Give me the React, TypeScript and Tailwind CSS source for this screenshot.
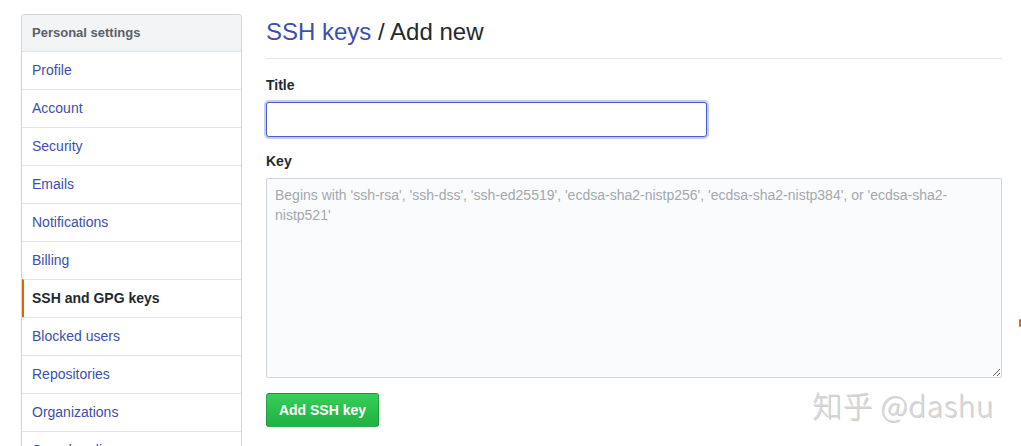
import { useState } from "react";

const menuItems = [
  "Profile",
  "Account",
  "Security",
  "Emails",
  "Notifications",
  "Billing",
  "SSH and GPG keys",
  "Blocked users",
  "Repositories",
  "Organizations",
  "Saved replies",
];

const App = () => {
  const [title, setTitle] = useState("");
  const [key, setKey] = useState("");

  return (
    <div className="relative h-[446px] w-[1021px] overflow-hidden bg-white font-['Liberation_Sans',Arial,sans-serif] text-[14px] text-[#24292e]">
      <div className="flex items-start pl-[21px] pt-[14px]">
        {/* sidebar */}
        <nav className="w-[221px] shrink-0 rounded-t-[3px] border border-[#d1d5da]">
          <div className="flex h-[36px] items-center rounded-t-[3px] bg-[#f3f4f6] pl-[10px] text-[13px] font-bold text-[#586069]">
            Personal settings
          </div>
          {menuItems.map((item) => {
            const active = item === "SSH and GPG keys";
            return (
              <a
                key={item}
                href="#"
                className={
                  active
                    ? "flex h-[38px] items-center border-t border-l-2 border-t-[#e1e4e8] border-l-[#e36209] pl-[8px] font-bold text-[#24292e]"
                    : "flex h-[38px] items-center border-t border-[#e1e4e8] pl-[10px] text-[#3c4fae]"
                }
              >
                {item}
              </a>
            );
          })}
        </nav>

        {/* main */}
        <main className="ml-[24px] w-[736px]">
          <div className="border-b border-[#e1e4e8] pb-[11px] pt-[3px]">
            <h2 className="text-[24px] leading-[30px] font-normal">
              <a href="#" className="text-[#3c4fae]">
                SSH keys
              </a>{" "}
              / Add new
            </h2>
          </div>

          <form className="pt-[16px]" onSubmit={(e) => e.preventDefault()}>
            <label className="block leading-[20px] font-bold">Title</label>
            <input
              value={title}
              onChange={(e) => setTitle(e.target.value)}
              className="mt-[7px] block h-[35px] w-[441px] rounded-[3px] border border-[#4a5bd0] bg-white px-2 shadow-[0_0_0_2px_rgba(88,110,230,0.35)] outline-none"
            />

            <label className="mt-[14px] block leading-[20px] font-bold">Key</label>
            <textarea
              value={key}
              onChange={(e) => setKey(e.target.value)}
              placeholder="Begins with 'ssh-rsa', 'ssh-dss', 'ssh-ed25519', 'ecdsa-sha2-nistp256', 'ecdsa-sha2-nistp384', or 'ecdsa-sha2-nistp521'"
              className="mt-[7px] block h-[200px] w-[736px] rounded-[2px] border border-[#d1d5da] bg-[#fafbfc] px-[8px] py-[6px] leading-[20px] outline-none placeholder:text-[#a3a8ae]"
            />

            <button
              type="submit"
              className="mt-[15px] h-[34px] w-[113px] rounded-[3px] border border-[rgba(27,31,35,0.2)] bg-gradient-to-b from-[#34d058] to-[#1fb141] font-bold text-white"
            >
              Add SSH key
            </button>
          </form>
        </main>
      </div>

      {/* watermark */}
      <div className="pointer-events-none absolute left-[812px] top-[385px] font-['Noto_Sans_CJK_SC',sans-serif] text-[30px] leading-[38px] font-light tracking-[0.5px] text-[#d6d6d6] [text-shadow:1px_1px_0_rgba(0,0,0,0.2)]">
        知乎 @dashu
      </div>
      <div className="absolute left-[1019px] top-[319px] h-[8px] w-[2px] rounded-full bg-[#e0622c]" />
    </div>
  );
};

export default App;
